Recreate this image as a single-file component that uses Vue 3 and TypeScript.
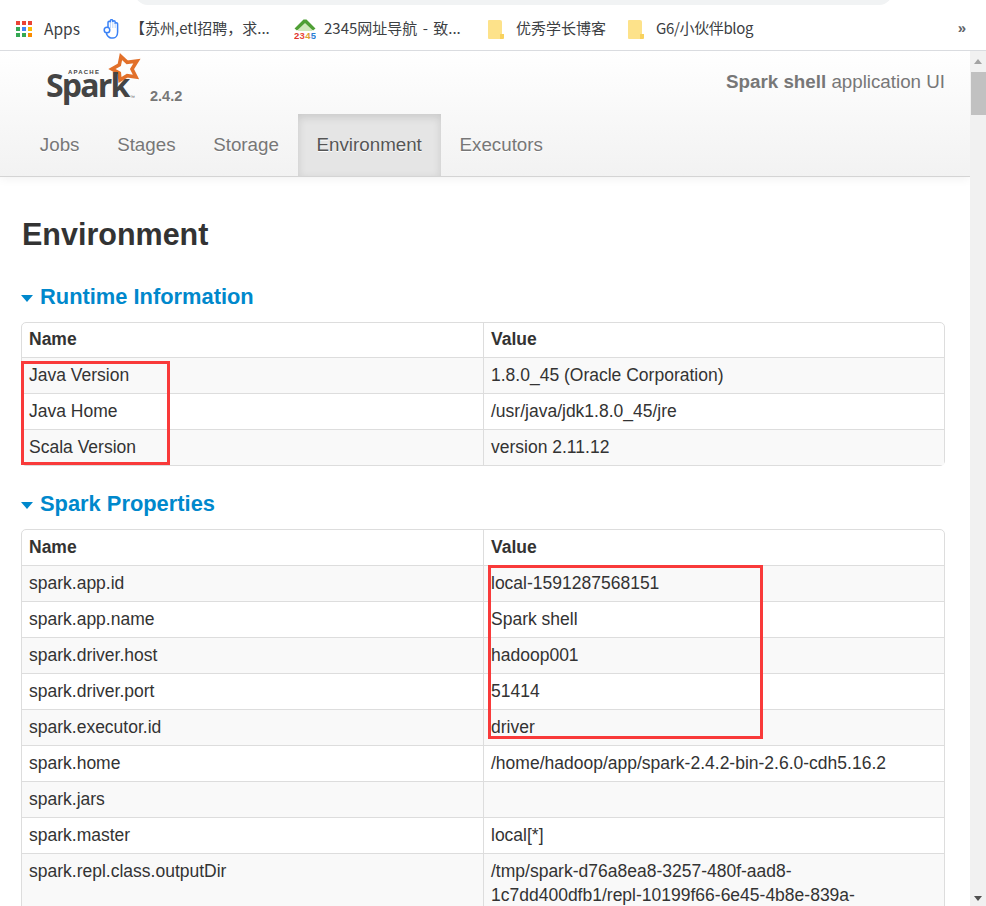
<script setup lang="ts">
interface Row { name: string; value: string[] }
const runtime: Row[] = [
  { name: 'Java Version', value: ['1.8.0_45 (Oracle Corporation)'] },
  { name: 'Java Home', value: ['/usr/java/jdk1.8.0_45/jre'] },
  { name: 'Scala Version', value: ['version 2.11.12'] },
]
const props: Row[] = [
  { name: 'spark.app.id', value: ['local-1591287568151'] },
  { name: 'spark.app.name', value: ['Spark shell'] },
  { name: 'spark.driver.host', value: ['hadoop001'] },
  { name: 'spark.driver.port', value: ['51414'] },
  { name: 'spark.executor.id', value: ['driver'] },
  { name: 'spark.home', value: ['/home/hadoop/app/spark-2.4.2-bin-2.6.0-cdh5.16.2'] },
  { name: 'spark.jars', value: [''] },
  { name: 'spark.master', value: ['local[*]'] },
  { name: 'spark.repl.class.outputDir', value: ['/tmp/spark-d76a8ea8-3257-480f-aad8-', '1c7dd400dfb1/repl-10199f66-6e45-4b8e-839a-'] },
]
const tabs = ['Jobs', 'Stages', 'Storage', 'Environment', 'Executors']
const dots = ['#ea4335','#ea4335','#ea4335','#34a853','#4285f4','#fbbc05','#34a853','#34a853','#fb8c00']
</script>

<template>
  <div class="window">
    <div class="omni"></div>
    <div class="bookmarks">
      <span class="bm bm-apps">
        <span class="apps"><i v-for="(c, i) in dots" :key="i" :style="{ background: c }"></i></span>
        <span>Apps</span>
      </span>
      <span class="bm bm-hand">
        <svg width="16" height="20" viewBox="0 0 16 20" fill="#fff" stroke="#3b82f6" stroke-width="1.5">
          <path d="M5 8 V3.500 a1.200 1.200 0 0 1 2.400 0 V1.800 a1.200 1.200 0 0 1 2.400 0 V3 a1.200 1.200 0 0 1 2.400 0 V5 a1.200 1.200 0 0 1 2.400 0 V13 c0 3.500 -2 6 -4.500 6 H8 C5.500 19 4.500 17 3.500 15 Z" />
          <circle cx="4" cy="11" r="2.800" />
          <path d="M7.400 4 V9 M9.800 3 V9 M12.200 4 V9" fill="none" stroke="#9cc2fb" stroke-width="0.7" />
        </svg>
        <span class="t1">【苏州,etl招聘，求...</span>
      </span>
      <span class="bm bm-house">
        <svg width="22" height="20" viewBox="0 0 22 20">
          <path d="M4 8 L11 3 L18 8 V12 H4 Z" fill="#cfe8bb" />
          <path d="M0.500 9.500 L9.500 0.500 H12.500 L21.500 9.500 L19 11.500 L11 4 L3 11.500 Z" fill="#4f9f35" />
          <text x="0" y="19.500" class="logo2345" textLength="22"><tspan fill="#e0352b">2</tspan><tspan fill="#e8483a">3</tspan><tspan fill="#e0a030">4</tspan><tspan fill="#2a7fd5">5</tspan></text>
        </svg>
        <span class="t2">2345网址导航 - 致...</span>
      </span>
      <span class="bm bm-f1">
        <svg class="folder" width="16" height="19" viewBox="0 0 16 19">
          <path d="M0 1 a1 1 0 0 1 1 -1 H12 a2 2 0 0 1 2 2 V18 a1 1 0 0 1 -1 1 H1 a1 1 0 0 1 -1 -1 Z" fill="#fde28a" />
          <path d="M12 14 h4 v4 a1 1 0 0 1 -1 1 h-3 z" fill="#f8d25f" />
        </svg>
        <span class="t3">优秀学长博客</span>
      </span>
      <span class="bm bm-f2">
        <svg class="folder" width="16" height="19" viewBox="0 0 16 19">
          <path d="M0 1 a1 1 0 0 1 1 -1 H12 a2 2 0 0 1 2 2 V18 a1 1 0 0 1 -1 1 H1 a1 1 0 0 1 -1 -1 Z" fill="#fde28a" />
          <path d="M12 14 h4 v4 a1 1 0 0 1 -1 1 h-3 z" fill="#f8d25f" />
        </svg>
        <span class="t4">G6/小伙伴blog</span>
      </span>
      <span class="more">»</span>
    </div>

    <div class="viewport">
      <div class="page">
        <header class="navbar">
          <div class="brand-row">
            <div class="brand">
              <svg class="star" width="40" height="36" viewBox="0 0 40 36">
                <path d="M17 4.600 L23.200 10.300 L33 9 L28 17 L32 25 L23.200 23.700 L16 28 L15.300 21.100 L8 17 L15.300 12.900 Z" fill="none" stroke="#e2702a" stroke-width="3.600" stroke-linejoin="miter" />
              </svg>
              <span class="apache">APACHE</span>
              <span class="spark">Spark</span>
              <span class="tm">™</span>
              <span class="version">2.4.2</span>
            </div>
            <p class="app-title"><strong>Spark shell</strong> application UI</p>
          </div>
          <nav class="tabs">
            <a v-for="t in tabs" :key="t" class="tab" :class="{ active: t === 'Environment' }">{{ t }}</a>
          </nav>
        </header>

        <main class="content">
          <h3 class="page-title">Environment</h3>

          <h4 class="section"><span class="arrow"></span>Runtime Information</h4>
          <div class="table-wrap first">
            <table>
              <thead><tr><th>Name</th><th>Value</th></tr></thead>
              <tbody>
                <tr v-for="r in runtime" :key="r.name">
                  <td>{{ r.name }}</td>
                  <td><div v-for="(v, i) in r.value" :key="i">{{ v }}</div></td>
                </tr>
              </tbody>
            </table>
            <div class="mark mark-a"></div>
          </div>

          <h4 class="section second"><span class="arrow"></span>Spark Properties</h4>
          <div class="table-wrap props">
            <table>
              <thead><tr><th>Name</th><th>Value</th></tr></thead>
              <tbody>
                <tr v-for="r in props" :key="r.name">
                  <td>{{ r.name }}</td>
                  <td><div v-for="(v, i) in r.value" :key="i">{{ v }}</div></td>
                </tr>
              </tbody>
            </table>
            <div class="mark mark-b"></div>
          </div>
        </main>
      </div>

      <div class="scrollbar">
        <span class="sb-up"></span>
        <span class="sb-thumb"></span>
        <span class="sb-spacer"></span>
        <span class="sb-down"></span>
      </div>
    </div>
  </div>
</template>

<style>
html, body { margin: 0; height: 906px; overflow: hidden; background: #fff; }
</style>

<style scoped>
.window {
  position: relative;
  width: 986px;
  height: 906px;
  overflow: hidden;
  display: flex;
  flex-direction: column;
  font-family: "Liberation Sans", Arial, sans-serif;
  color: #333;
}
.omni {
  position: absolute;
  left: 135px;
  top: -20px;
  width: 757px;
  height: 25px;
  background: #f1f3f4;
  border-radius: 14px;
}
.bookmarks {
  flex: none;
  background: #fff;
  border-bottom: 1px solid #dadce0;
  display: flex;
  align-items: center;
  padding-top: 8px;
  height: 42px;
  font-family: "Noto Sans CJK SC", "Noto Sans", sans-serif;
  font-size: 15px;
  color: #3c4043;
}
.bm { display: flex; align-items: center; flex: none; white-space: nowrap; line-height: 20px; }
.bm > span:last-child { position: relative; top: -1px; }
.bm-apps { margin-left: 16px; width: 87px; gap: 12px; font-size: 15.500px; }
.apps { display: grid; grid-template-columns: repeat(3, 4px); gap: 2px; width: 16px; }
.apps i { display: block; width: 4px; height: 4px; }
.bm-hand { width: 191px; gap: 11px; }
.bm-house { width: 194px; gap: 8px; }
.t2 { word-spacing: 2px; }
.t4 { letter-spacing: -0.350px; }
.logo2345 { font: bold 9.500px "Liberation Sans", sans-serif; }
.bm-f1 { width: 140px; gap: 12px; }
.bm-f2 { gap: 12px; }
.more {
  margin-left: auto;
  margin-right: 20px;
  font: bold 15px "Liberation Sans", sans-serif;
  color: #5f6368;
  margin-top: -4px;
}

.viewport { flex: 1; display: flex; min-height: 0; }
.page { flex: 1; min-width: 0; overflow: hidden; }
.scrollbar {
  width: 16px;
  flex: none;
  background: #f1f1f1;
  display: flex;
  flex-direction: column;
  align-items: center;
}
.sb-up, .sb-down { width: 0; height: 0; border-left: 4.500px solid transparent; border-right: 4.500px solid transparent; }
.sb-up { border-bottom: 5px solid #a3a3a3; margin-top: 8px; margin-bottom: 8px; }
.sb-down { border-top: 5px solid #505050; margin-bottom: 5px; }
.sb-thumb { display: block; width: 15px; margin-left: 1px; height: 43px; background: #c1c1c1; }
.sb-spacer { flex: 1; }

.navbar {
  height: 125px;
  background: linear-gradient(to bottom, #ffffff, #f2f2f2);
  border-bottom: 1px solid #d4d4d4;
  box-shadow: 0 1px 10px rgba(0, 0, 0, 0.067);
  position: relative;
  display: flex;
  flex-direction: column;
}
.brand-row { height: 63px; display: flex; justify-content: space-between; flex: none; }
.brand { position: relative; width: 200px; }
.star { position: absolute; left: 104px; top: 1px; }
.apache {
  position: absolute;
  left: 68px;
  top: 19px;
  font: bold 6px/5px "Liberation Sans", sans-serif;
  letter-spacing: 1.200px;
  color: #444;
}
.spark {
  position: absolute;
  left: 46px;
  top: 24px;
  font: 700 32px/20px "Open Sans", sans-serif;
  letter-spacing: -1.800px;
  color: #444;
}
.tm {
  position: absolute;
  left: 130px;
  top: 43px;
  font: 5px/6px "Liberation Sans", sans-serif;
  color: #666;
}
.version {
  position: absolute;
  left: 150px;
  top: 37px;
  font: bold 14.500px/17px "Liberation Sans", sans-serif;
  color: #777;
}
.app-title {
  margin: 20px 25px 0 0;
  font-size: 18.750px;
  line-height: 22px;
  color: #777;
}
.tabs { display: flex; padding-left: 21px; flex: 1; }
.tab {
  padding: 0 18.850px;
  font-size: 18.750px;
  line-height: 62px;
  color: #777;
  text-shadow: 0 1px 0 #fff;
}
.tab.active {
  background: #e5e5e5;
  color: #555;
  box-shadow: inset 0 3px 8px rgba(0, 0, 0, 0.125);
}

.content { padding: 0 25px 0 21px; }
.page-title {
  margin: 0;
  padding: 39px 0 0 1px;
  font-size: 30.500px;
  line-height: 37px;
  font-weight: bold;
  color: #333;
}
.section {
  margin: 0;
  padding-top: 31px;
  font-size: 21.875px;
  line-height: 26px;
  font-weight: bold;
  color: #0088cc;
  display: flex;
  align-items: center;
}
.section.second { padding-top: 25px; }
.arrow {
  width: 0;
  height: 0;
  margin: 3px 7px 0 0;
  border-left: 6.500px solid transparent;
  border-right: 6.500px solid transparent;
  border-top: 7px solid #0088cc;
}
.table-wrap { position: relative; margin-top: 12px; }
table {
  width: 100%;
  table-layout: fixed;
  border-collapse: separate;
  border-spacing: 0;
  border: 1px solid #ddd;
  border-radius: 5px;
  line-height: 24px;
  color: #333;
}
th, td {
  text-align: left;
  vertical-align: top;
  font-size: 17.500px;
}
th { font-weight: bold; padding: 4px 7px 6px; }
.props th { padding: 5px 7px 6px; }
td { border-top: 1px solid #ddd; padding: 5px 7px 6px; height: 24px; }
th + th, td + td { border-left: 1px solid #ddd; }
tbody tr:nth-child(odd) td { background: #f9f9f9; }
.mark {
  position: absolute;
  border: 3px solid #f93a3a;
  box-sizing: border-box;
  pointer-events: none;
}
.mark-a { left: 0; top: 39px; width: 149px; height: 104px; }
.mark-b { left: 467px; top: 36px; width: 275px; height: 174px; }
</style>
